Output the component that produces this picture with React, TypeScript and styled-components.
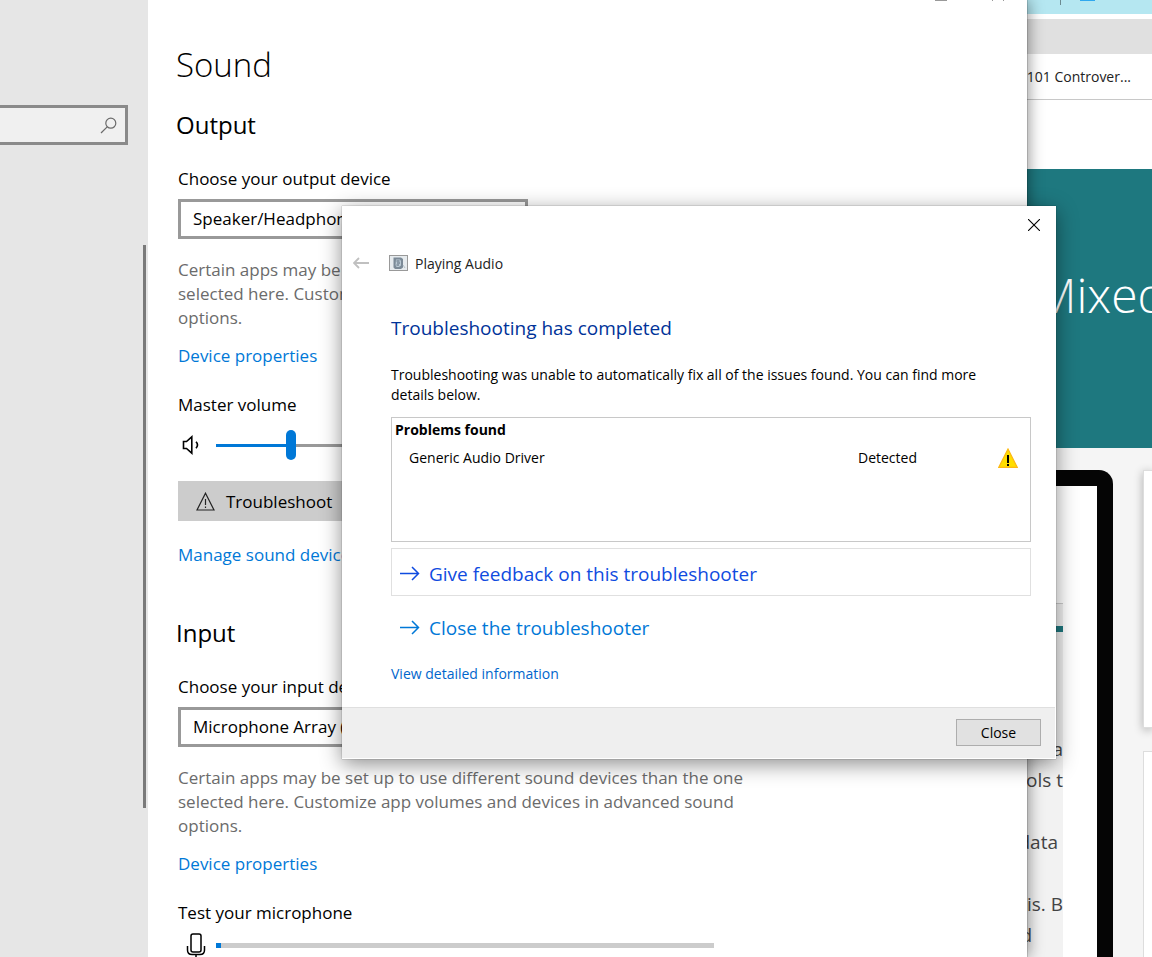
import React from "react";
import styled, { createGlobalStyle } from "styled-components";

const Global = createGlobalStyle`
  * { box-sizing: border-box; }
  body { margin: 0; font-family: "Open Sans", "Noto Sans", sans-serif; color: #000; }
  h1, h2, p, table { margin: 0; }
  button, input, select { font: inherit; color: inherit; border-radius: 0; margin: 0; }
  svg { display: block; flex: none; }
`;

const Desktop = styled.div`
  position: relative;
  height: 100vh;
  overflow: hidden;
  background: #fff;
`;

/* Browser window at the back */

const BrowserWindow = styled.div`
  position: absolute;
  inset: 0 0 0 auto;
  width: 152px;
  display: flex;
  flex-direction: column;
  background: #fff;
`;

const TabStrip = styled.div`
  flex: none;
  display: flex;
  gap: 19px;
  height: 14px;
  padding-left: 60px;
  background: #b5e7f1;
`;

const TabDivider = styled.span`
  width: 1px;
  height: 5px;
  background: #6c8a90;
`;

const TabIcon = styled.span`
  width: 15px;
  height: 1px;
  background: #2fa8ee;
`;

const AddressBar = styled.div`
  flex: none;
  height: 35px;
  margin-top: 5px;
  background: #e0e0e0;
`;

const Bookmarks = styled.div`
  flex: none;
  display: flex;
  justify-content: flex-end;
  height: 46px;
  padding-right: 21px;
  border-bottom: 1px solid #c8c8c8;
  font-size: 14px;
  line-height: 46px;
  white-space: nowrap;
  color: #222;
`;

const Hero = styled.div`
  flex: none;
  height: 279px;
  margin-top: 69px;
  padding: 90px 0 0 35px;
  background: #1e787f;
  color: #fff;
  font-size: 48px;
  font-weight: 300;
  line-height: 72px;
  white-space: nowrap;
  overflow: hidden;
`;

const PageSection = styled.div`
  flex: 1;
  min-height: 0;
  display: flex;
  gap: 30px;
  padding-top: 22px;
  background: #f5f5f5;
  overflow: hidden;
`;

const Device = styled.div`
  width: 113px;
  padding: 16px 16px 0 0;
  border-radius: 0 14px 0 0;
  background: #050505;
`;

const Screen = styled.div`
  height: 100%;
  padding: 117px 34px 0 0;
  background: #fff;
`;

const Article = styled.div`
  height: 100%;
  padding-top: 22px;
  border-top: 1px solid #ccc;
  background: #f2f2f2;
`;

const AccentBar = styled.div`
  height: 6px;
  margin-bottom: 102px;
  background: #1e787f;
`;

const ArticleLine = styled.p<{ $inset: number }>`
  height: 31px;
  padding-right: ${(p) => p.$inset}px;
  font-size: 19px;
  line-height: 31px;
  text-align: right;
  white-space: pre;
  color: #444;
`;

const Cards = styled.div`
  flex: 1;
  display: flex;
  flex-direction: column;
  gap: 23px;
`;

const Card = styled.div<{ $raised?: boolean }>`
  flex: none;
  height: 258px;
  border: 1px solid #ddd;
  border-right: 0;
  background: #fff;
  box-shadow: ${(p) => (p.$raised ? "0 2px 10px rgba(0, 0, 0, 0.3)" : "none")};
`;

/* Settings window */

const SettingsWindow = styled.div`
  position: absolute;
  inset: 0 125px 0 0;
  display: flex;
  background: #fff;
  box-shadow: 0 0 1px rgba(0, 0, 0, 0.8), 2px 0 14px rgba(0, 0, 0, 0.4);
`;

const Sidebar = styled.aside`
  flex: none;
  width: 148px;
  padding-top: 105px;
  background: #e6e6e6;
`;

const SearchBox = styled.label`
  display: flex;
  align-items: center;
  width: 128px;
  height: 40px;
  padding-right: 8px;
  border: 3px solid #8a8a8a;
  border-left: 0;
  background: #f0f0f0;
`;

const SearchInput = styled.input`
  flex: 1;
  min-width: 0;
  border: 0;
  background: none;
  outline: 0;
`;

const ScrollThumb = styled.div`
  width: 3px;
  height: 563px;
  margin: 100px 2px 0 auto;
  background: #7a7a7a;
`;

const Main = styled.main`
  flex: 1;
  min-width: 0;
  padding-left: 30px;
  font-size: 17px;
  line-height: 24px;
`;

const WindowControls = styled.div`
  display: flex;
  justify-content: flex-end;
  gap: 45px;
  height: 42px;
  padding-right: 23px;
`;

const ControlButton = styled.button`
  display: flex;
  align-items: flex-start;
  height: 12px;
  padding: 0;
  border: 0;
  background: none;
`;

const Title = styled.h1`
  margin-left: -2px;
  font-size: 33px;
  font-weight: 350;
  line-height: 45px;
`;

const SectionTitle = styled.h2<{ $before: number }>`
  margin: ${(p) => p.$before}px 0 26px -2px;
  font-size: 24px;
  font-weight: 400;
  line-height: 32px;
`;

const FieldLabel = styled.label`
  display: block;
`;

const Select = styled.select`
  display: block;
  width: 350px;
  height: 40px;
  margin: 8px 0 19px;
  padding: 0 12px;
  border: 3px solid #999;
  background: #fff;
  appearance: none;
`;

const Hint = styled.p`
  max-width: 566px;
  color: #6b6b6b;
`;

const LinkLine = styled.p`
  margin: 14px 0 25px;
`;

const Link = styled.a`
  color: #0078d7;
  text-decoration: none;
`;

const SliderRow = styled.div`
  display: flex;
  align-items: center;
  gap: 14px;
  height: 30px;
  margin: 13px 0 21px 4px;
`;

const Slider = styled.input`
  appearance: none;
  width: 498px;
  height: 30px;
  margin: 0;
  background: linear-gradient(to right, #0078d7 75px, #999 75px) center / 100% 3px no-repeat;
  &::-webkit-slider-thumb {
    appearance: none;
    width: 10px;
    height: 30px;
    border-radius: 5px;
    background: #0078d7;
  }
`;

const TroubleshootButton = styled.button`
  display: flex;
  align-items: center;
  gap: 11px;
  height: 40px;
  margin-bottom: 22px;
  padding: 1px 18px 0;
  border: 0;
  background: #ccc;
`;

const MicRow = styled.div`
  display: flex;
  align-items: center;
  gap: 10px;
  margin: 8px 0 0 8px;
`;

const Meter = styled.div`
  width: 498px;
  height: 5px;
  background: #ccc;
`;

const MeterLevel = styled.div`
  width: 5px;
  height: 5px;
  background: #0078d7;
`;

/* Troubleshooter dialog */

const Dialog = styled.section`
  position: absolute;
  top: 206px;
  left: 342px;
  right: 96px;
  background: #fff;
  font-size: 14px;
  line-height: 20px;
  box-shadow: 0 0 1px rgba(0, 0, 0, 0.5), 0 5px 20px rgba(0, 0, 0, 0.45);
`;

const DialogTop = styled.div`
  display: flex;
  justify-content: flex-end;
  padding: 13px 16px 0 0;
`;

const IconButton = styled.button`
  padding: 0;
  border: 0;
  background: none;
`;

const DialogTitle = styled.div`
  display: flex;
  align-items: center;
  height: 20px;
  margin-top: 22px;
  padding-left: 11px;
  color: #222;
`;

const BackButton = styled(IconButton)`
  margin-right: 20px;
`;

const TitleText = styled.span`
  margin-left: 7px;
  padding-top: 2px;
`;

const DialogBody = styled.div`
  padding: 41px 25px 23px 49px;
`;

const Heading = styled.h2`
  margin-bottom: 23px;
  font-size: 19px;
  font-weight: 400;
  line-height: 28px;
  color: #003399;
`;

const Summary = styled.p`
  padding-right: 32px;
`;

const ProblemBox = styled.div`
  height: 125px;
  margin: 12px 0 6px;
  border: 1px solid #c8c8c8;
`;

const ProblemTable = styled.table`
  width: 100%;
  border-collapse: collapse;
  th { padding: 2px 3px; text-align: left; }
  td { height: 32px; padding: 0; vertical-align: middle; }
  td:first-child { padding-left: 17px; }
  td:nth-child(2) { width: 140px; }
  td:last-child { width: 32px; }
`;

const CommandLink = styled.button<{ $focused?: boolean }>`
  display: flex;
  align-items: center;
  gap: 9px;
  width: 100%;
  height: 48px;
  margin-bottom: 6px;
  padding: 4px 8px 0;
  border: 1px solid ${(p) => (p.$focused ? "#e0e0e0" : "transparent")};
  background: none;
  font-size: 19px;
  color: ${(p) => (p.$focused ? "#0f4be0" : "#0078d7")};
`;

const DetailLink = styled(Link)`
  display: block;
  margin-top: 14px;
  color: #0066cc;
`;

const Footer = styled.footer`
  display: flex;
  justify-content: flex-end;
  margin: 0 1px 1px 0;
  padding: 11px 14px 12px;
  border-top: 1px solid #dfdfdf;
  background: #efefef;
`;

const CloseButton = styled.button`
  width: 85px;
  height: 27px;
  padding: 0;
  border: 1px solid #adadad;
  background: #e1e1e1;
`;

const HINT =
  "Certain apps may be set up to use different sound devices than the one selected here. Customize app volumes and devices in advanced sound options.";

const ARTICLE = [
  { text: "a", inset: 0 },
  { text: "ols t", inset: 0 },
  { text: "", inset: 0 },
  { text: "data", inset: 5 },
  { text: "", inset: 0 },
  { text: "is. B", inset: 0 },
  { text: "d", inset: 31 },
];

const ArrowRight = () => (
  <svg width="20" height="16" viewBox="0 0 20 16" fill="none" stroke="currentColor" strokeWidth="1.5">
    <path d="M0 7.5H18.5M12 1L18.5 7.5L12 14" />
  </svg>
);

export default function App() {
  return (
    <Desktop>
      <Global />
      <BrowserWindow>
        <TabStrip>
          <TabDivider />
          <TabIcon />
        </TabStrip>
        <AddressBar />
        <Bookmarks>101 Controver...</Bookmarks>
        <Hero>Mixed</Hero>
        <PageSection>
          <Device>
            <Screen>
              <Article>
                <AccentBar />
                {ARTICLE.map((line, i) => (
                  <ArticleLine key={i} $inset={line.inset}>{line.text}</ArticleLine>
                ))}
              </Article>
            </Screen>
          </Device>
          <Cards>
            <Card $raised />
            <Card />
          </Cards>
        </PageSection>
      </BrowserWindow>

      <SettingsWindow>
        <Sidebar>
          <SearchBox>
            <SearchInput type="search" aria-label="Find a setting" />
            <svg width="17" height="17" viewBox="0 0 17 17" fill="none" stroke="#6a6a6a" strokeWidth="1.2">
              <circle cx="10.8" cy="6.2" r="5" />
              <path d="M7.2 9.8L1 16" />
            </svg>
          </SearchBox>
          <ScrollThumb />
        </Sidebar>
        <Main>
          <WindowControls>
            <ControlButton aria-label="Maximize">
              <svg width="12" height="1" viewBox="0 11 12 1"><rect y="11" width="12" height="1" fill="#999" /></svg>
            </ControlButton>
            <ControlButton aria-label="Close window">
              <svg width="12" height="1" viewBox="0 11 12 1"><path d="M0 11h1v1H0zM11 11h1v1h-1z" fill="#999" /></svg>
            </ControlButton>
          </WindowControls>
          <Title>Sound</Title>
          <SectionTitle $before={22}>Output</SectionTitle>
          <FieldLabel htmlFor="output">Choose your output device</FieldLabel>
          <Select id="output"><option>Speaker/Headphones</option></Select>
          <Hint>{HINT}</Hint>
          <LinkLine><Link href="#output">Device properties</Link></LinkLine>
          <FieldLabel htmlFor="volume">Master volume</FieldLabel>
          <SliderRow>
            <svg width="20" height="20" viewBox="0 0 20 20" fill="none" stroke="#000" strokeWidth="1.6">
              <path d="M1.5 6.5H4.5L9.8 1.8V18.2L4.5 13.5H1.5Z" />
              <path d="M14 6.8Q17 10 14 13.2" />
            </svg>
            <Slider id="volume" type="range" max={1000} defaultValue={143} />
          </SliderRow>
          <TroubleshootButton>
            <svg width="19" height="19" viewBox="0 0 19 19" fill="none" stroke="#222" strokeWidth="1.2">
              <path d="M9.5 1.2L18 18H1Z" />
              <path d="M9.5 7V13M9.5 14.5V16" />
            </svg>
            Troubleshoot
          </TroubleshootButton>
          <p><Link href="#devices">Manage sound devices</Link></p>
          <SectionTitle $before={50}>Input</SectionTitle>
          <FieldLabel htmlFor="input">Choose your input device</FieldLabel>
          <Select id="input"><option>Microphone Array (</option></Select>
          <Hint>{HINT}</Hint>
          <LinkLine><Link href="#input">Device properties</Link></LinkLine>
          <p>Test your microphone</p>
          <MicRow>
            <svg width="20" height="24" viewBox="0 0 20 24" fill="none" stroke="#000" strokeWidth="1.5">
              <rect x="5" y="1" width="10" height="18" rx="2" />
              <path d="M1.5 13V17Q1.5 21.5 6 21.5H14Q18.5 21.5 18.5 17V13M10 21.5V24" />
            </svg>
            <Meter><MeterLevel /></Meter>
          </MicRow>
        </Main>
      </SettingsWindow>

      <Dialog role="dialog" aria-label="Playing Audio">
        <DialogTop>
          <IconButton aria-label="Close dialog">
            <svg width="12" height="12" viewBox="0 0 12 12" fill="none" stroke="#000" strokeWidth="1.1">
              <path d="M0 0L12 12M12 0L0 12" />
            </svg>
          </IconButton>
        </DialogTop>
        <DialogTitle>
          <BackButton aria-label="Back">
            <svg width="16" height="12" viewBox="0 0 16 12" fill="none" stroke="#c0c0c0" strokeWidth="1.8">
              <path d="M1 6H16M6 1L1 6L6 11" />
            </svg>
          </BackButton>
          <svg width="19" height="16" viewBox="0 0 19 16">
            <rect x="0.5" y="0.5" width="18" height="15" fill="#e6ebee" stroke="#999" />
            <path d="M4.5 2.5H12L14 4V12.5L12 14H6L4.5 12.5Z" fill="#7b8a97" />
            <path d="M7 4.5H11L12 6V10.5L10 12H7.5L6.5 10Z" fill="#b9c8d3" />
            <path d="M7.5 6H10.5M8 8H11M7.5 10H10" stroke="#5a6b7a" />
            <path d="M14 10L16 13" stroke="#b4c0c8" />
          </svg>
          <TitleText>Playing Audio</TitleText>
        </DialogTitle>
        <DialogBody>
          <Heading>Troubleshooting has completed</Heading>
          <Summary>
            Troubleshooting was unable to automatically fix all of the issues found. You can find more details below.
          </Summary>
          <ProblemBox>
            <ProblemTable>
              <thead><tr><th colSpan={3}>Problems found</th></tr></thead>
              <tbody>
                <tr>
                  <td>Generic Audio Driver</td>
                  <td>Detected</td>
                  <td>
                    <svg width="20" height="20" viewBox="0 0 20 20">
                      <path d="M10 1L19.3 19.4H0.7Z" fill="#ffde00" stroke="#fdb813" strokeWidth="1.2" />
                      <path d="M9 7h2v8H9zM9 16h2v2H9z" fill="#000" />
                    </svg>
                  </td>
                </tr>
              </tbody>
            </ProblemTable>
          </ProblemBox>
          <CommandLink $focused><ArrowRight />Give feedback on this troubleshooter</CommandLink>
          <CommandLink><ArrowRight />Close the troubleshooter</CommandLink>
          <DetailLink href="#details">View detailed information</DetailLink>
        </DialogBody>
        <Footer><CloseButton>Close</CloseButton></Footer>
      </Dialog>
    </Desktop>
  );
}
